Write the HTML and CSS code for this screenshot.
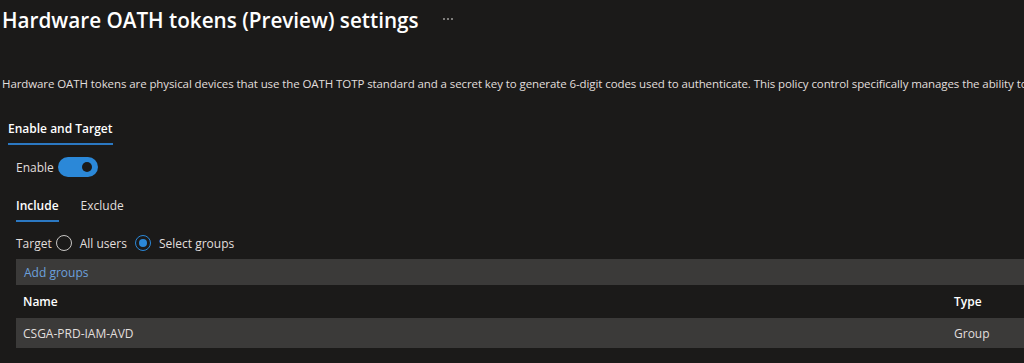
FILE: index.html
```html
<!DOCTYPE html>
<html>
<head>
<meta charset="utf-8">
<link rel="stylesheet" href="styles.css">
</head>
<body>
<div class="page">
  <header class="header">
    <h1 class="title">Hardware OATH tokens (Preview) settings</h1>
    <span class="more"><i></i><i></i><i></i></span>
  </header>
  <p class="desc">Hardware OATH tokens are physical devices that use the OATH TOTP standard and a secret key to generate 6-digit codes used to authenticate. This policy control specifically manages the ability to use hardware OATH tokens.</p>
  <div class="tabs">
    <span class="tab active">Enable and Target</span>
  </div>
  <div class="content">
    <div class="enable-row">
      <span class="label">Enable</span>
      <span class="toggle"><span class="knob"></span></span>
    </div>
    <div class="pivot">
      <span class="pivot-item active">Include</span>
      <span class="pivot-item">Exclude</span>
    </div>
    <div class="target-row">
      <span class="label">Target</span>
      <span class="radio"></span><span class="radio-label">All users</span>
      <span class="radio checked"><span class="dot"></span></span><span class="radio-label">Select groups</span>
    </div>
    <div class="addbar"><span class="link">Add groups</span></div>
    <div class="table">
      <div class="row head"><span class="c-name">Name</span><span class="c-type">Type</span></div>
      <div class="row item"><span class="c-name">CSGA-PRD-IAM-AVD</span><span class="c-type">Group</span></div>
    </div>
  </div>
</div>
</body>
</html>
```
FILE: styles.css
```css
html, body {
  margin: 0;
  padding: 0;
  background: #1b1a19;
  overflow: hidden;
}
body {
  font-family: "Segoe UI", "Open Sans", "Noto Sans", sans-serif;
  color: #e1dfdd;
  font-size: 12px;
}
.page {
  width: 1024px;
  height: 363px;
  overflow: hidden;
}
.header {
  display: flex;
  align-items: center;
  height: 40px;
  padding-left: 2px;
}
.title {
  margin: 0;
  font-size: 20.7px;
  font-weight: 600;
  color: #ffffff;
  white-space: nowrap;
  line-height: 40px;
}
.more {
  display: flex;
  gap: 2px;
  margin-left: 24px;
  position: relative;
  top: -1px;
}
.more i {
  display: block;
  width: 2px;
  height: 2px;
  border-radius: 50%;
  background: #a19f9d;
}
.desc {
  margin: 36px 0 0 2px;
  white-space: nowrap;
  line-height: 16px;
  font-size: 11.5px;
  letter-spacing: -0.09px;
  color: #e1dfdd;
}
.tabs {
  display: flex;
  margin: 29px 0 0 8px;
}
.tab {
  font-weight: 600;
  color: #ffffff;
  line-height: 16px;
  padding-bottom: 6px;
  border-bottom: 2px solid #2b78c2;
}
.content {
  padding-left: 16px;
}
.enable-row {
  display: flex;
  align-items: center;
  margin-top: 12px;
  height: 20px;
}
.label {
  color: #e1dfdd;
  margin-right: 4px;
}
.toggle {
  width: 40px;
  height: 20px;
  border-radius: 10px;
  background: #2b88d8;
  display: flex;
  align-items: center;
  justify-content: flex-end;
  box-sizing: border-box;
  padding-right: 6px;
}
.knob {
  width: 10px;
  height: 10px;
  border-radius: 50%;
  background: #1b1a19;
}
.pivot {
  display: flex;
  gap: 22px;
  margin-top: 21px;
}
.pivot-item {
  line-height: 16px;
  padding-bottom: 6px;
  color: #e1dfdd;
}
.pivot-item.active {
  font-weight: 600;
  color: #ffffff;
  border-bottom: 2px solid #2b78c2;
}
.target-row {
  display: flex;
  align-items: center;
  margin-top: 11px;
  height: 20px;
}
.radio {
  width: 16px;
  height: 16px;
  border: 1px solid #c8c6c4;
  border-radius: 50%;
  box-sizing: border-box;
  display: flex;
  align-items: center;
  justify-content: center;
  margin-right: 8px;
}
.radio.checked {
  border-color: #2b88d8;
}
.dot {
  width: 8px;
  height: 8px;
  border-radius: 50%;
  background: #2b88d8;
}
.radio-label {
  margin-right: 8px;
}
.addbar {
  margin-top: 6px;
  height: 26px;
  background: #3b3a39;
  display: flex;
  align-items: center;
  padding-left: 8px;
}
.link {
  color: #6ca0dc;
}
.table .row {
  display: flex;
  align-items: center;
  padding-left: 7px;
}
.row.head {
  height: 33px;
  font-weight: 600;
  color: #ffffff;
}
.row.item {
  height: 30px;
  background: #3b3a39;
}
.c-name {
  width: 931px;
}
```
